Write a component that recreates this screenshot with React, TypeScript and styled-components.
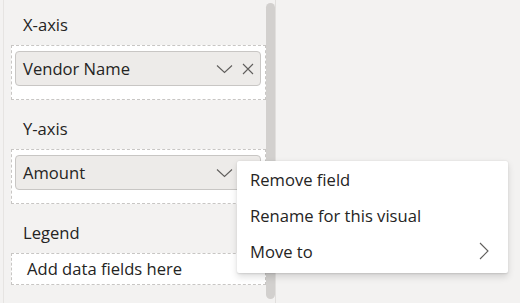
import styled, { createGlobalStyle } from "styled-components";

const GlobalStyle = createGlobalStyle`
  html, body {
    margin: 0;
    padding: 0;
    background: #f3f2f1;
  }
  * {
    box-sizing: border-box;
  }
`;

const Root = styled.div`
  position: relative;
  display: flex;
  width: 520px;
  height: 303px;
  overflow: hidden;
  background: #f3f2f1;
  font-family: "Open Sans", "Noto Sans", sans-serif;
  font-size: 16.6px;
  color: #252423;
`;

const Pane = styled.div`
  display: flex;
  width: 273px;
  margin-left: 3px;
  border-left: 1px solid #e6e4e2;
  border-right: 1px solid #e1dfdd;
`;

const Content = styled.div`
  flex: 1;
  padding-top: 14px;
  display: flex;
  flex-direction: column;
`;

const Label = styled.div`
  padding-left: 19px;
  line-height: 22px;
  margin-bottom: 9px;
`;

const Well = styled.div<{ $empty?: boolean }>`
  margin-left: 7px;
  background: #fff;
  border: 1px dashed #c8c6c4;
  padding: ${(p) => (p.$empty ? "0 0 1px 15px" : "5px 4px 13px 3px")};
  height: ${(p) => (p.$empty ? "41px" : "55px")};
  display: flex;
  align-items: ${(p) => (p.$empty ? "center" : "flex-start")};
  margin-bottom: 18px;
`;

const Pill = styled.div`
  flex: 1;
  height: 35px;
  display: flex;
  align-items: center;
  padding: 0 6px 0 7px;
  background: #edebe9;
  border: 1px solid #c8c6c4;
  border-radius: 4px;
`;

const PillName = styled.span`
  flex: 1;
`;

const IconBox = styled.span`
  display: flex;
  align-items: center;
  margin-left: 9px;
`;

const Track = styled.div`
  width: 9px;
  padding: 3px 0 4px;
  display: flex;
`;

const Thumb = styled.div`
  flex: 1;
  background: #d2d0ce;
  border-radius: 5px;
`;

const Canvas = styled.div`
  flex: 1;
`;

const Menu = styled.div`
  position: absolute;
  left: 237px;
  top: 161px;
  width: 271px;
  padding: 0 0 4px;
  background: #fff;
  border-radius: 2px;
  box-shadow: 0 3.2px 7.2px rgba(0, 0, 0, 0.13), 0 0.6px 1.8px rgba(0, 0, 0, 0.11);
`;

const MenuItem = styled.div`
  height: 36px;
  display: flex;
  align-items: center;
  padding: 0 19px 0 13px;
  color: #252423;
`;

const MenuText = styled.span`
  flex: 1;
`;

const Chevron = () => (
  <svg width="17" height="10" viewBox="0 0 17 10">
    <path d="M1 1.5 L8.5 8.5 L16 1.5" fill="none" stroke="#605e5c" strokeWidth="1.1" />
  </svg>
);

const Close = () => (
  <svg width="12" height="12" viewBox="0 0 12 12">
    <path d="M1 1 L11 11 M11 1 L1 11" fill="none" stroke="#605e5c" strokeWidth="1.1" />
  </svg>
);

const ChevronRight = () => (
  <svg width="10" height="18" viewBox="0 0 10 18">
    <path d="M1 1 L9 9 L1 17" fill="none" stroke="#605e5c" strokeWidth="1.1" />
  </svg>
);

function FieldPill({ name }: { name: string }) {
  return (
    <Pill>
      <PillName>{name}</PillName>
      <IconBox>
        <Chevron />
      </IconBox>
      <IconBox>
        <Close />
      </IconBox>
    </Pill>
  );
}

export default function App() {
  return (
    <>
      <GlobalStyle />
      <Root>
        <Pane>
          <Content>
            <Label>X-axis</Label>
            <Well>
              <FieldPill name="Vendor Name" />
            </Well>
            <Label>Y-axis</Label>
            <Well>
              <FieldPill name="Amount" />
            </Well>
            <Label>Legend</Label>
            <Well $empty>Add data fields here</Well>
          </Content>
          <Track>
            <Thumb />
          </Track>
        </Pane>
        <Canvas />
        <Menu>
          <MenuItem>
            <MenuText>Remove field</MenuText>
          </MenuItem>
          <MenuItem>
            <MenuText>Rename for this visual</MenuText>
          </MenuItem>
          <MenuItem>
            <MenuText>Move to</MenuText>
            <ChevronRight />
          </MenuItem>
        </Menu>
      </Root>
    </>
  );
}
